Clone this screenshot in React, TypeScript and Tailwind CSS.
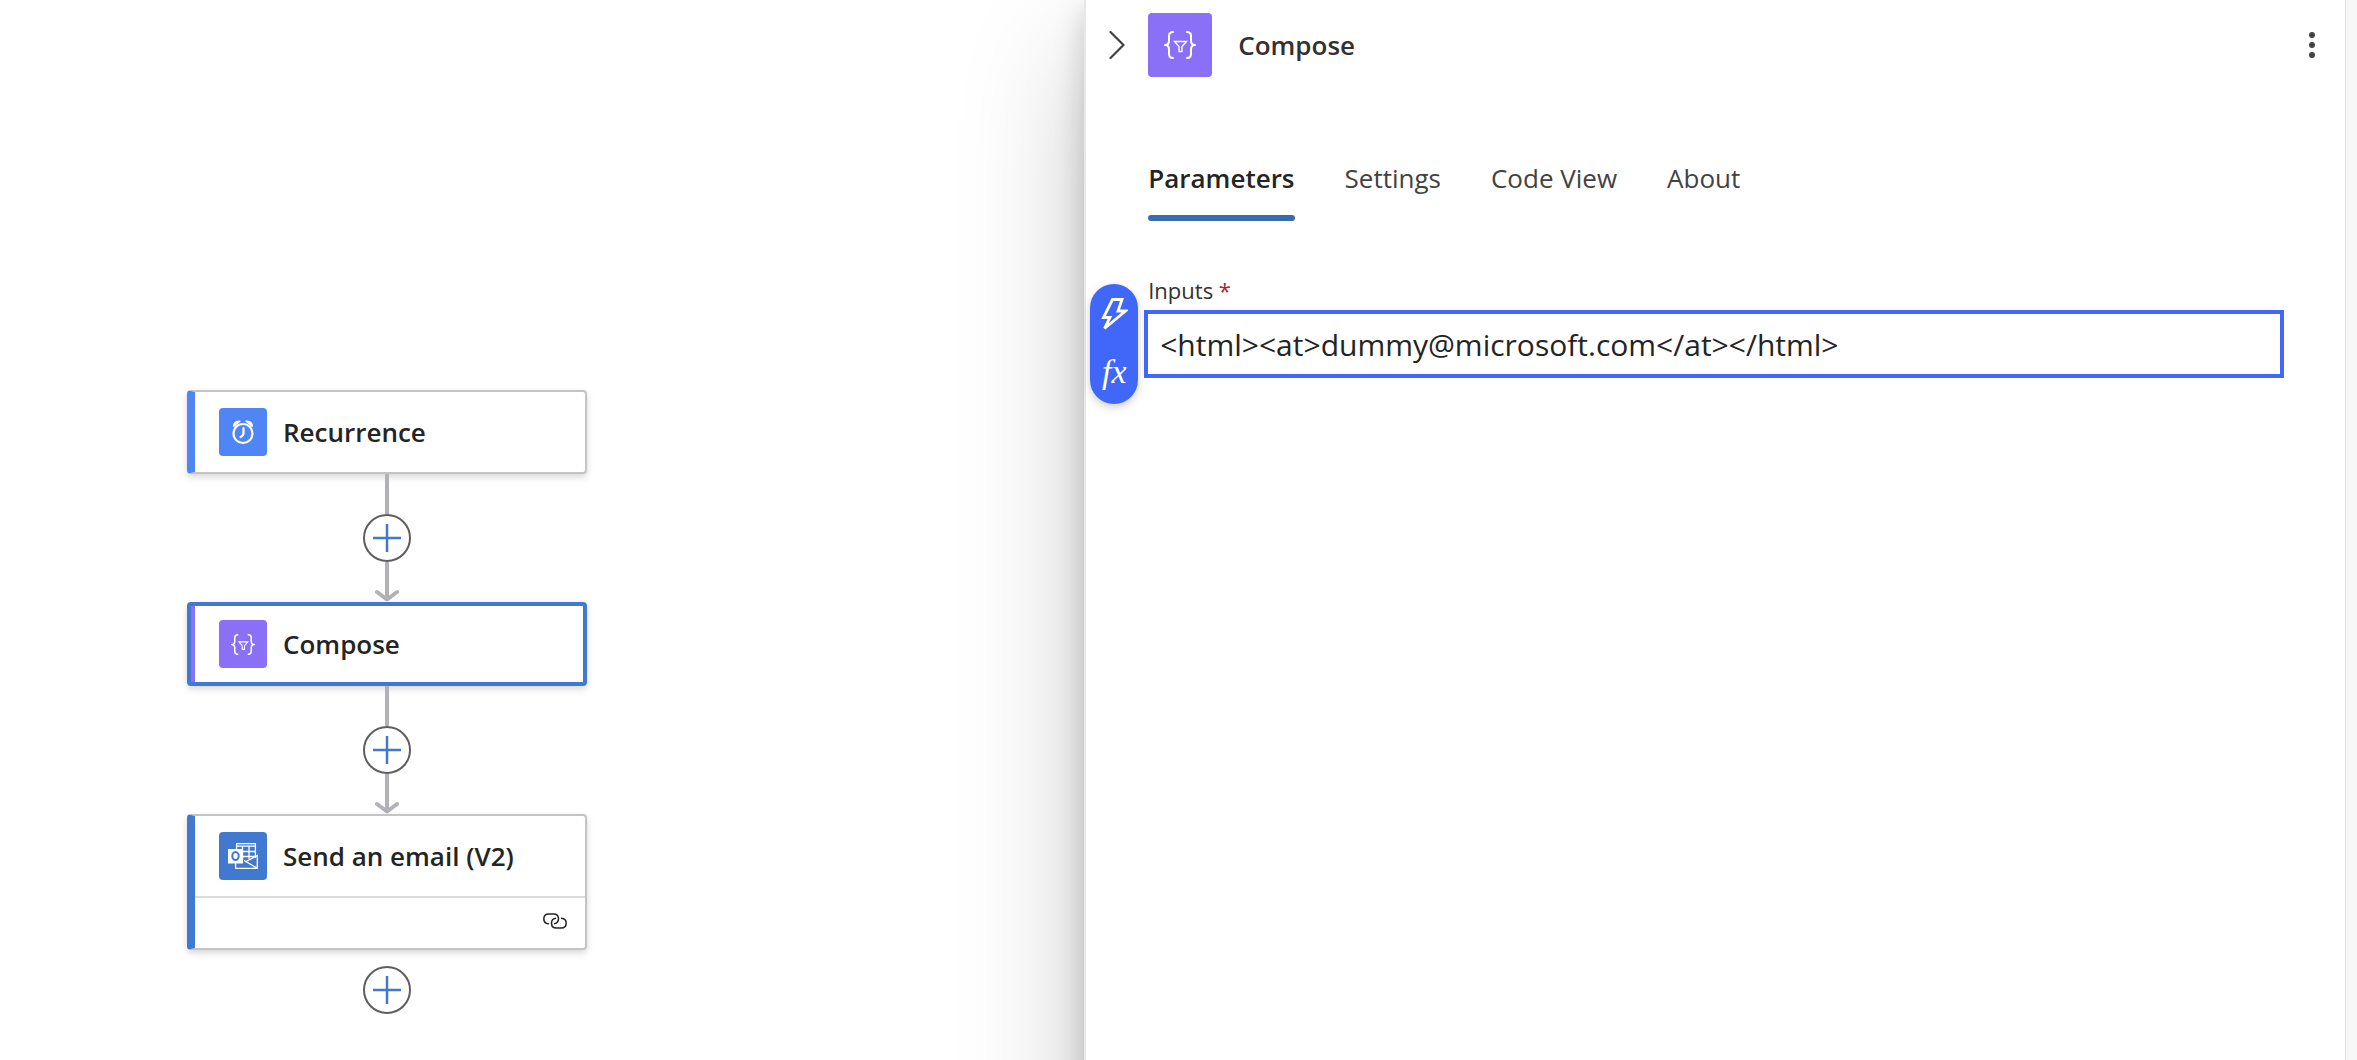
import { Fragment, useState, type ReactNode } from "react";

function BracesIcon({ className }: { className: string }) {
  return (
    <svg viewBox="0 0 32 28" className={className} fill="none" stroke="white" strokeLinecap="round" strokeLinejoin="round" aria-hidden="true">
      <path strokeWidth="2" d="M9 1C6 1 5 2.500 5 5v4.500C5 12.500 3.500 14 1 14c2.500 0 4 1.500 4 4.500V23c0 2.500 1 4 4 4" />
      <path strokeWidth="2" d="M23 1c3 0 4 1.500 4 4v4.500c0 3 1.500 4.500 4 4.500-2.500 0-4 1.500-4 4.500V23c0 2.500-1 4-4 4" />
      <path strokeWidth="1.400" strokeLinejoin="miter" d="M10.500 10.500h12l-4.500 5v5h-3v-5z" />
    </svg>
  );
}

function ClockIcon() {
  return (
    <svg viewBox="0 0 24 26" className="h-[26px] w-6" fill="none" stroke="white" strokeLinecap="round" aria-hidden="true">
      <circle cx="12" cy="14.500" r="9.500" strokeWidth="2.200" />
      <path strokeWidth="2.200" d="M12.500 9V14c0 1.800-1 3-3 4" />
      <path fill="white" stroke="none" d="M2 7.500C1.500 4 5 .8 9 1.500c.7.200.9.900.3 1.300L4 7.300c-.7.800-1.500.900-2 .2zM22 7.500c.5-3.500-3-6.700-7-6-.7.200-.9.900-.3 1.300L20 7.300c.7.800 1.500.9 2 .2z" />
    </svg>
  );
}

function OutlookIcon() {
  return (
    <svg viewBox="0 0 30 28" className="h-7 w-[30px]" fill="none" stroke="white" aria-hidden="true">
      <path strokeWidth="1.300" d="M8.600 7V1.700h18.800V16M8.600 4.200h18.800M8 9.500h19.400M14 14.500h13.400M14.500 4.200V18M21 4.200v12.500" />
      <path strokeWidth="1.300" d="M7.600 20v6.300h21.700V13.500L17 20M16 18.500l13 7.500" />
      <path fill="white" stroke="none" d="M0 7h15v14.500H0z" />
      <ellipse cx="7.500" cy="14" rx="3.200" ry="3.900" stroke="#4178d0" strokeWidth="2" />
    </svg>
  );
}

function LinkIcon() {
  return (
    <svg viewBox="0 0 24 16" className="h-4 w-6" fill="none" stroke="#242424" strokeWidth="1.500" strokeLinecap="round" aria-hidden="true">
      <path d="M5.500 10.800C2.500 10.500.8 8.600.8 6c0-3 2-5 5-5h4.700c3 0 5 2 5 4.800 0 2.600-1.500 4.500-4 4.900" />
      <path d="M18.500 5.200c3 .3 4.700 2.200 4.700 4.800 0 3-2 5-5 5h-4.700c-3 0-5-2-5-4.800 0-2.600 1.500-4.500 4-4.900" />
    </svg>
  );
}

function AddButton() {
  return (
    <button aria-label="Insert a new step" className="flex size-12 items-center justify-center rounded-full border-2 border-[#605e5c] bg-white">
      <svg viewBox="0 0 28 28" className="size-7" stroke="#4178d0" strokeWidth="2.500" aria-hidden="true">
        <path d="M14 0v28M0 14h28" />
      </svg>
    </button>
  );
}

function Connector() {
  return (
    <div className="flex h-32 flex-col items-center">
      <div className="h-10 w-1 bg-[#b1b1b7]" />
      <AddButton />
      <svg viewBox="0 0 24 40" className="h-10 w-6" fill="none" stroke="#b1b1b7" strokeWidth="4" strokeLinecap="round" strokeLinejoin="round" aria-hidden="true">
        <path strokeLinecap="butt" d="M12 0v37" />
        <path d="M2 30l10 7.500L22 30" />
      </svg>
    </div>
  );
}

type Step = {
  title: string;
  icon: ReactNode;
  tile: string;
  bar: string;
  selected?: boolean;
  linked?: boolean;
};

const steps: Step[] = [
  { title: "Recurrence", icon: <ClockIcon />, tile: "bg-[#5085f6]", bar: "border-l-8 border-l-[#5085f6]" },
  { title: "Compose", icon: <BracesIcon className="h-[21px] w-6" />, tile: "bg-[#8970f6]", bar: "border-l-4 border-l-[#8970f6]", selected: true },
  { title: "Send an email (V2)", icon: <OutlookIcon />, tile: "bg-[#4178d0]", bar: "border-l-8 border-l-[#4178d0]", linked: true },
];

function StepCard({ step }: { step: Step }) {
  const frame = step.selected
    ? "border-4 border-[#4178d0]"
    : `border-2 border-[#c4c4c4] ${step.bar}`;
  return (
    <article className={`w-[400px] rounded bg-white shadow-[0_3px_7px_rgba(0,0,0,0.16)] ${frame}`}>
      <button className={`flex w-full items-center gap-4 pl-6 text-left ${step.selected ? `h-[76px] ${step.bar}` : "h-20"}`}>
        <span className={`flex size-12 items-center justify-center rounded ${step.tile}`}>{step.icon}</span>
        <span className="text-[26px] leading-9 font-semibold text-[#242424]">{step.title}</span>
      </button>
      {step.linked && (
        <div className="flex h-[52px] items-center justify-end border-t-2 border-[#dcdcdc] pr-[18px] pb-1">
          <LinkIcon />
        </div>
      )}
    </article>
  );
}

const tabs = ["Parameters", "Settings", "Code View", "About"];

export default function App() {
  const [active, setActive] = useState("Parameters");
  const [value, setValue] = useState("<html><at>dummy@microsoft.com</at></html>");

  return (
    <div className="flex h-screen overflow-hidden bg-white font-['Open_Sans',sans-serif] text-[#242424]">
      <main className="flex w-[46%] flex-col items-start pt-[390px] pl-[187px]">
        <div className="flex flex-col items-center">
          {steps.map((step, i) => (
            <Fragment key={step.title}>
              {i > 0 && <Connector />}
              <StepCard step={step} />
            </Fragment>
          ))}
          <div className="mt-4">
            <AddButton />
          </div>
        </div>
      </main>

      <aside className="-mb-48 flex flex-1 border-l-2 border-[#e8e8e8] bg-white shadow-[0_52px_116px_rgba(0,0,0,0.22),0_10px_28px_rgba(0,0,0,0.18)]">
        <div className="flex min-w-0 flex-1 flex-col">
          <header className="flex items-center pt-[13px] pr-[23px] pl-4">
            <button aria-label="Collapse panel" className="mr-4 flex h-16 w-[30px] items-center justify-center">
              <svg viewBox="0 0 16 28" className="h-7 w-4" fill="none" stroke="#424242" strokeWidth="2.200" strokeLinecap="round" strokeLinejoin="round" aria-hidden="true">
                <path d="M1.500 1L14.500 14l-13 13" />
              </svg>
            </button>
            <span className="flex size-16 items-center justify-center rounded bg-[#8970f6]">
              <BracesIcon className="h-7 w-8" />
            </span>
            <h1 className="ml-[26px] flex-1 text-[26px] leading-9 font-semibold text-[#323130]">Compose</h1>
            <button aria-label="More commands" className="flex size-5 items-center justify-center">
              <svg viewBox="0 0 6 26" className="h-[26px] w-1.5 shrink-0" fill="#424242" aria-hidden="true">
                <circle cx="3" cy="3" r="3" />
                <circle cx="3" cy="13" r="3" />
                <circle cx="3" cy="23" r="3" />
              </svg>
            </button>
          </header>

          <div role="tablist" className="mt-20 flex gap-[50px] pl-[62px]">
            {tabs.map((tab) => (
              <button
                key={tab}
                role="tab"
                aria-selected={tab === active}
                onClick={() => setActive(tab)}
                className={`flex flex-col gap-4 text-[26px] leading-[42px] ${tab === active ? "font-semibold text-[#242424]" : "text-[#424242]"}`}
              >
                {tab}
                {tab === active && <span className="h-1.5 w-full rounded-full bg-[#3a6ab4]" />}
              </button>
            ))}
          </div>

          <div className="mt-[54px] flex pr-[61px] pl-1">
            <div className="mt-[9px] mr-1.5 flex h-[120px] w-12 flex-col items-center justify-between rounded-full bg-[#4067f8] py-3 text-white shadow-[0_3px_8px_rgba(0,0,0,0.2)]">
              <button aria-label="Add dynamic content" className="flex h-9 items-center">
                <svg viewBox="0 0 28 34" className="h-[34px] w-7" fill="none" stroke="white" strokeWidth="2.800" aria-hidden="true">
                  <path d="M12.500 2.500H22L18 14h7.500L4.500 31.500 10 20.500H3.500z" />
                </svg>
              </button>
              <button aria-label="Add expression" className="flex h-10 items-center font-['Liberation_Serif',serif] text-[34px] leading-9 italic">
                fx
              </button>
            </div>
            <div className="flex min-w-0 flex-1 flex-col">
              <label htmlFor="inputs" className="pb-1 pl-1 text-[22px] leading-[31px] text-[#323130]">
                Inputs <span className="text-[#a4262c]">*</span>
              </label>
              <input
                id="inputs"
                required
                value={value}
                onChange={(e) => setValue(e.target.value)}
                className="h-[68px] w-full border-4 border-[#4067f8] bg-white px-3 text-[30px] text-[#242424] outline-none"
              />
            </div>
          </div>
        </div>
        <div className="w-3 border-l border-[#e0e0e0] bg-[#f7f7f7]" />
      </aside>
    </div>
  );
}
